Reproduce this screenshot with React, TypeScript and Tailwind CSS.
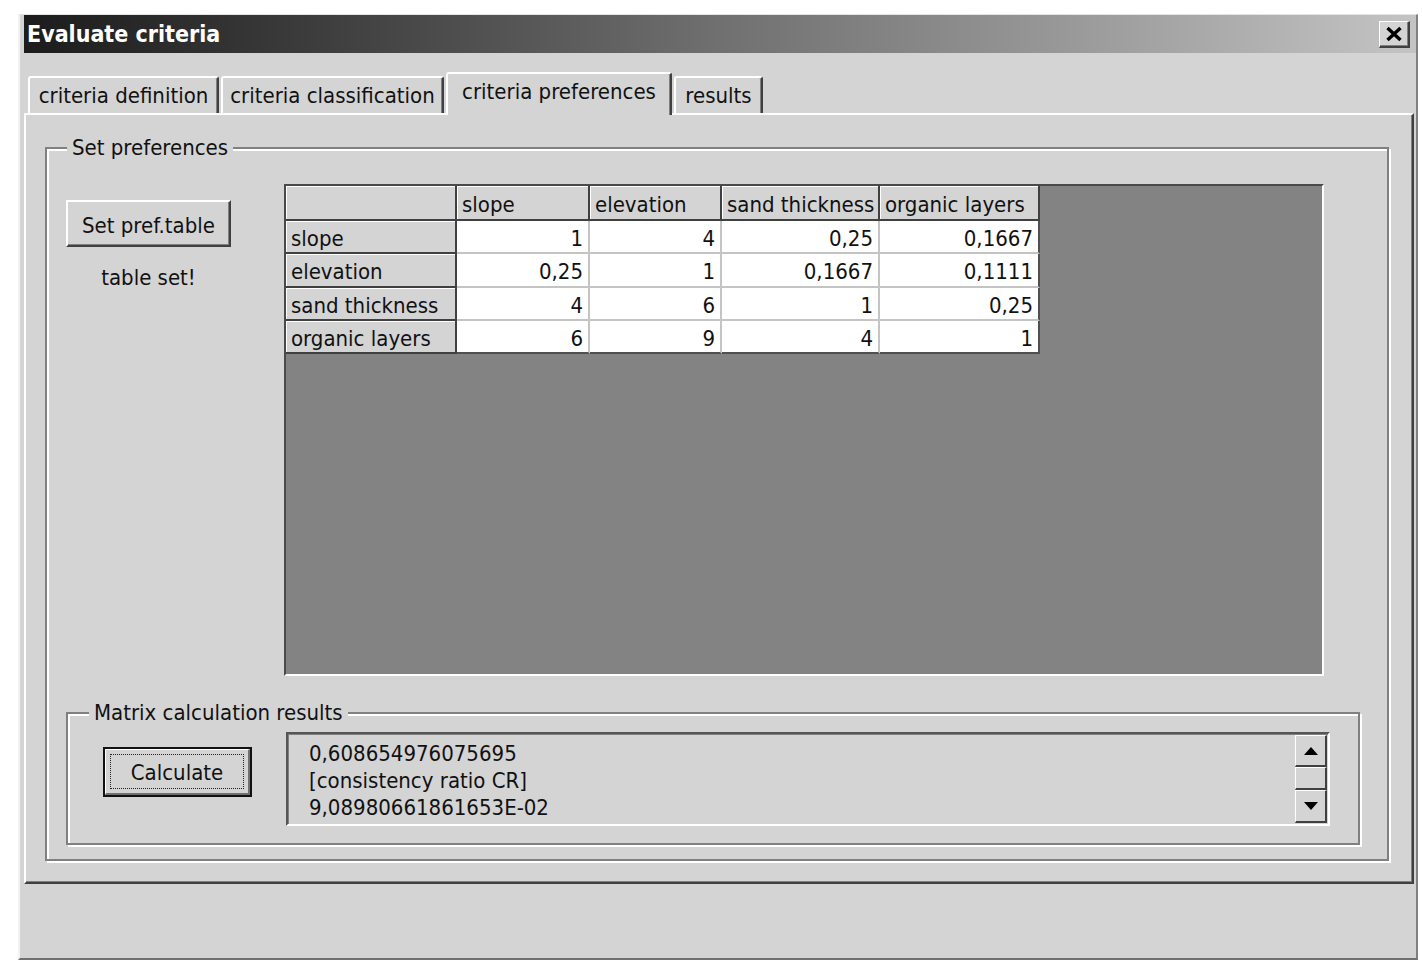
import React from "react";

const FONT = "font-['DejaVu_Sans_Condensed','DejaVu_Sans',sans-serif]";

const cols = ["slope", "elevation", "sand thickness", "organic layers"];
const rows: { name: string; vals: string[] }[] = [
  { name: "slope", vals: ["1", "4", "0,25", "0,1667"] },
  { name: "elevation", vals: ["0,25", "1", "0,1667", "0,1111"] },
  { name: "sand thickness", vals: ["4", "6", "1", "0,25"] },
  { name: "organic layers", vals: ["6", "9", "4", "1"] },
];
const colW = ["w-[171px]", "w-[133px]", "w-[132px]", "w-[158px]", "w-[160px]"];
const rowH = ["h-[33px]", "h-[34px]", "h-[33px]", "h-[33px]"];

function HeaderCell({ w, h, children }: { w: string; h: string; children?: React.ReactNode }) {
  return (
    <div
      className={`${w} ${h} shrink-0 bg-[#d4d4d4] border-r-2 border-b-2 border-r-[#404040] border-b-[#404040] shadow-[inset_1px_1px_0_#ffffff] flex items-center pl-[5px] pt-[3px] overflow-hidden whitespace-nowrap`}
    >
      {children}
    </div>
  );
}

function DataCell({ w, h, last, lastRow, children }: { w: string; h: string; last?: boolean; lastRow?: boolean; children?: React.ReactNode }) {
  return (
    <div
      className={`${w} ${h} shrink-0 bg-white border-r-2 border-b-2 ${last ? "border-r-[#505050]" : "border-r-[#c4c4c4]"} ${lastRow ? "border-b-[#505050]" : "border-b-[#c4c4c4]"} flex items-center justify-end pr-[5px] pt-[3px]`}
    >
      {children}
    </div>
  );
}

function GroupBox({ label, labelLeft, className, children }: { label: string; labelLeft: string; className: string; children: React.ReactNode }) {
  return (
    <div className={`relative border-2 border-[#808080] shadow-[inset_2px_2px_0_#ffffff,2px_2px_0_#ffffff] ${className}`}>
      <div className={`absolute top-[-14px] ${labelLeft} bg-[#d4d4d4] px-[5px] leading-[26px] whitespace-nowrap`}>{label}</div>
      {children}
    </div>
  );
}

function Tab({ w, selected, children }: { w: string; selected?: boolean; children: React.ReactNode }) {
  return (
    <div
      className={`${w} shrink-0 bg-[#d4d4d4] border-t-2 border-l-2 border-t-white border-l-white border-r-2 border-r-[#404040] shadow-[inset_-1px_0_0_#808080] rounded-t-[3px] flex items-center justify-center whitespace-nowrap ${
        selected ? "h-[43px] -mb-[2px] pb-[6px] relative z-10" : "h-[37px] pb-[1px]"
      }`}
    >
      {children}
    </div>
  );
}

function ArrowUp() {
  return (
    <svg width="14" height="8" viewBox="0 0 14 8">
      <path d="M7 0 L14 8 L0 8 Z" fill="#000" />
    </svg>
  );
}
function ArrowDown() {
  return (
    <svg width="14" height="8" viewBox="0 0 14 8">
      <path d="M0 0 L14 0 L7 8 Z" fill="#000" />
    </svg>
  );
}

export default function App() {
  return (
    <div className={`w-[1422px] h-[964px] bg-white overflow-hidden ${FONT} text-[22px] text-[#111]`}>
      <div className="ml-[18px] mt-[14px] w-[1400px] h-[946px] bg-[#d4d4d4] border-t border-l-2 border-r-2 border-b-2 border-t-[#e4e4e4] border-l-[#f2f2f2] border-r-[#808080] border-b-[#707070] flex flex-col">
        {/* Title bar */}
        <div className="ml-[4px] h-[38px] shrink-0 bg-linear-to-r from-[#1c1c1c] via-[#707070] to-[#c4c4c4] flex items-center justify-between pl-[3px] pr-[6px]">
          <span className="text-white font-bold text-[23px] leading-none">Evaluate criteria</span>
          <div className="w-[31px] h-[27px] bg-[#d4d4d4] border-t border-l border-white border-r-2 border-b-2 border-r-[#404040] border-b-[#404040] shadow-[inset_-1px_-1px_0_#808080] flex items-center justify-center">
            <svg width="18" height="16" viewBox="0 0 18 16">
              <path d="M2.5 2 L15.5 14 M15.5 2 L2.5 14" stroke="#000" strokeWidth="3.4" />
            </svg>
          </div>
        </div>

        {/* Tab control */}
        <div className="ml-[4px] mr-[2px] mt-[19px] flex flex-col">
          <div className="h-[41px] flex items-end gap-[2px] pl-[4px]">
            <Tab w="w-[191px]">criteria definition</Tab>
            <Tab w="w-[223px]">criteria classification</Tab>
            <Tab w="w-[226px]" selected>
              criteria preferences
            </Tab>
            <Tab w="w-[89px]">results</Tab>
          </div>
          <div className="h-[771px] border-2 border-t-white border-l-white border-r-[#404040] border-b-[#404040] shadow-[inset_-1px_-1px_0_#808080]">
            <GroupBox label="Set preferences" labelLeft="left-[20px]" className="ml-[19px] mt-[32px] w-[1344px] h-[714px]">
              <div className="pl-[19px] pt-[35px] flex flex-col">
                <div className="flex items-start">
                  <div className="w-[165px] mt-[16px] flex flex-col items-center">
                    <div className="w-[165px] h-[47px] bg-[#d4d4d4] border-t-2 border-l-2 border-white border-r-2 border-b-2 border-r-[#404040] border-b-[#404040] shadow-[inset_-1px_-1px_0_#808080] flex items-center justify-center pt-[3px]">
                      Set pref.table
                    </div>
                    <div className="mt-[18px] leading-[26px]">table set!</div>
                  </div>
                  <div className="ml-[53px] w-[1040px] h-[492px] bg-[#838383] border-t-2 border-l-2 border-t-[#4a4a4a] border-l-[#4a4a4a] border-b-2 border-r-2 border-b-white border-r-white">
                    <div className="flex flex-col">
                      <div className="flex">
                        <HeaderCell w={colW[0]} h="h-[35px]" />
                        {cols.map((c, i) => (
                          <HeaderCell key={c} w={colW[i + 1]} h="h-[35px]">
                            {c}
                          </HeaderCell>
                        ))}
                      </div>
                      {rows.map((r, ri) => (
                        <div className="flex" key={r.name}>
                          <HeaderCell w={colW[0]} h={rowH[ri]}>
                            {r.name}
                          </HeaderCell>
                          {r.vals.map((v, vi) => (
                            <DataCell key={vi} w={colW[vi + 1]} h={rowH[ri]} last={vi === 3} lastRow={ri === 3}>
                              {v}
                            </DataCell>
                          ))}
                        </div>
                      ))}
                    </div>
                  </div>
                </div>

                <GroupBox label="Matrix calculation results" labelLeft="left-[21px]" className="mt-[36px] w-[1294px] h-[133px]">
                  <div className="pl-[35px] pt-[18px] flex items-start">
                    <div className="mt-[15px] w-[149px] h-[50px] border-2 border-[#111] bg-[#d4d4d4]">
                      <div className="w-full h-full border-t border-l border-white border-r-2 border-b-2 border-r-[#707070] border-b-[#707070] p-[4px]">
                        <div className="w-full h-full border border-dotted border-[#222] flex items-center justify-center pt-[2px]">
                          Calculate
                        </div>
                      </div>
                    </div>
                    <div className="ml-[34px] w-[1044px] h-[94px] bg-[#d4d4d4] border-t-2 border-l-2 border-t-[#555] border-l-[#555] border-b-2 border-r-2 border-b-white border-r-white shadow-[inset_1px_1px_0_#808080] flex">
                      <div className="flex-1 pl-[21px] pt-[6px] leading-[27px]">
                        <div>0,608654976075695</div>
                        <div>[consistency ratio CR]</div>
                        <div>9,08980661861653E-02</div>
                      </div>
                      <div className="w-[32px] mr-[1px] my-[1px] flex flex-col">
                        <div className="h-[32px] bg-[#d4d4d4] border-t border-l border-white border-r-2 border-b-2 border-r-[#404040] border-b-[#404040] flex items-center justify-center">
                          <ArrowUp />
                        </div>
                        <div className="h-[23px] bg-[#d4d4d4] border-t border-l border-white border-r-2 border-b-2 border-r-[#404040] border-b-[#404040]" />
                        <div className="h-[33px] bg-[#d4d4d4] border-t border-l border-white border-r-2 border-b-2 border-r-[#404040] border-b-[#404040] flex items-center justify-center">
                          <ArrowDown />
                        </div>
                      </div>
                    </div>
                  </div>
                </GroupBox>
              </div>
            </GroupBox>
          </div>
        </div>
      </div>
    </div>
  );
}
